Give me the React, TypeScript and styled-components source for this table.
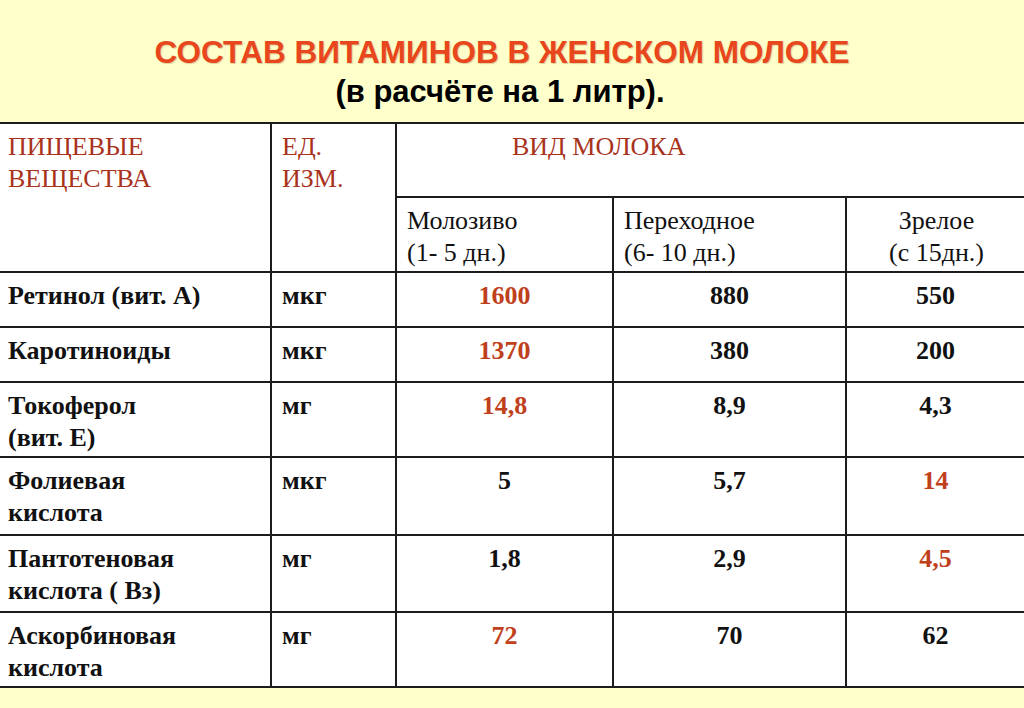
import styled, { createGlobalStyle } from "styled-components";

const Global = createGlobalStyle`
    html, body {
        margin:0;
        padding:0;
        background:#FFFFCC;
    }
    #root {
        width:1024px;
        height:708px;
        overflow:hidden;
    }
`;

const Page = styled.div`
    width:1024px;
    height:708px;
    display:flex;
    flex-direction:column;
    background:#FFFFCC;
`;

const Heading = styled.div`
    height:122px;
    display:flex;
    flex-direction:column;
    align-items:center;
    padding-top:32px;
    padding-right:20px;
    box-sizing:border-box;
    font-family:"Liberation Sans", Arial, sans-serif;
    font-weight:bold;
    line-height:40px;
    h1 {
        margin:0;
        font-size:31.5px;
        color:#E8461C;
        text-shadow:1px 1px 1px rgba(120,60,0,0.25);
    }
    p {
        margin:0;
        color:#000;
        font-size:31px;
        margin-right:4px;
    }
`;

const Table = styled.table`
    width:1024px;
    border-collapse:collapse;
    background:#fff;
    table-layout:fixed;
    font-family:"Liberation Serif", "Times New Roman", serif;
    font-size:26px;
    line-height:32px;
    td {
        border:2px solid #1c1c1c;
        vertical-align:top;
        padding:7px 8px 0 8px;
        box-sizing:border-box;
    }
    tr td:first-child { border-left:none; }
    tr td:last-child { border-right:none; }
`;

const Row = styled.tr<{ $h: number }>`
    height:${p => p.$h}px;
`;

const HeadCell = styled.td<{ $pl?: number }>`
    color:#A8321C;
    padding-left:${p => p.$pl ?? 8}px !important;
`;

const SubCell = styled.td<{ $center?: boolean }>`
    color:#111;
    padding-left:10px !important;
    text-align:${p => (p.$center ? "center" : "left")};
`;

const NameCell = styled.td`
    font-weight:bold;
    color:#111;
`;

const UnitCell = styled(NameCell)`
    padding-left:10px !important;
`;

const ValueCell = styled.td<{ $hot?: boolean }>`
    font-weight:bold;
    text-align:center;
    color:${p => (p.$hot ? "#C0401C" : "#111")};
`;

type Item = {
    name: string[];
    unit: string;
    values: [string, string, string];
    hot: [boolean, boolean, boolean];
    h: number;
};

const items: Item[] = [
    { name: ["Ретинол (вит. А)"], unit: "мкг", values: ["1600", "880", "550"], hot: [true, false, false], h: 55 },
    { name: ["Каротиноиды"], unit: "мкг", values: ["1370", "380", "200"], hot: [true, false, false], h: 55 },
    { name: ["Токоферол", "(вит. Е)"], unit: "мг", values: ["14,8", "8,9", "4,3"], hot: [true, false, false], h: 75 },
    { name: ["Фолиевая", "кислота"], unit: "мкг", values: ["5", "5,7", "14"], hot: [false, false, true], h: 78 },
    { name: ["Пантотеновая", "кислота ( Вз)"], unit: "мг", values: ["1,8", "2,9", "4,5"], hot: [false, false, true], h: 77 },
    { name: ["Аскорбиновая", "кислота"], unit: "мг", values: ["72", "70", "62"], hot: [true, false, false], h: 75 },
];

const App = () => {
    return (
        <>
            <Global />
            <Page>
                <Heading>
                    <h1>СОСТАВ ВИТАМИНОВ В ЖЕНСКОМ МОЛОКЕ</h1>
                    <p>(в расчёте на 1 литр).</p>
                </Heading>
                <Table>
                    <colgroup>
                        <col style={{ width: 271 }} />
                        <col style={{ width: 125 }} />
                        <col style={{ width: 217 }} />
                        <col style={{ width: 233 }} />
                        <col style={{ width: 178 }} />
                    </colgroup>
                    <tbody>
                        <Row $h={74}>
                            <HeadCell rowSpan={2}>ПИЩЕВЫЕ<br />ВЕЩЕСТВА</HeadCell>
                            <HeadCell rowSpan={2} $pl={10}>ЕД.<br />ИЗМ.</HeadCell>
                            <HeadCell colSpan={3} $pl={115}>ВИД МОЛОКА</HeadCell>
                        </Row>
                        <Row $h={75}>
                            <SubCell>Молозиво<br />(1- 5 дн.)</SubCell>
                            <SubCell>Переходное<br />(6- 10 дн.)</SubCell>
                            <SubCell $center>Зрелое<br />(с 15дн.)</SubCell>
                        </Row>
                        {items.map(it => (
                            <Row $h={it.h} key={it.name[0]}>
                                <NameCell>
                                    {it.name.map((n, i) => (
                                        <div key={i}>{n}</div>
                                    ))}
                                </NameCell>
                                <UnitCell>{it.unit}</UnitCell>
                                {it.values.map((v, i) => (
                                    <ValueCell key={i} $hot={it.hot[i]}>{v}</ValueCell>
                                ))}
                            </Row>
                        ))}
                    </tbody>
                </Table>
            </Page>
        </>
    );
};

export default App;
